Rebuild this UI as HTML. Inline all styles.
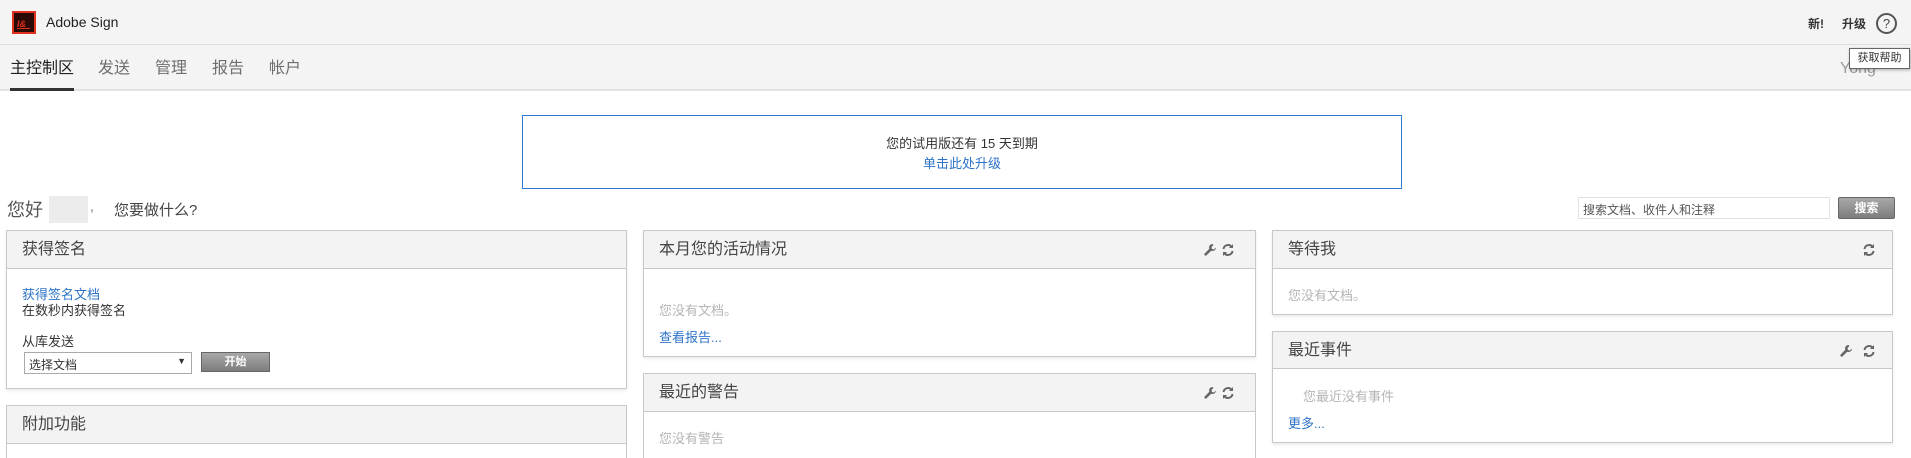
<!DOCTYPE html>
<html><head><meta charset="utf-8"><style>
*{margin:0;padding:0;box-sizing:border-box}
html{width:1911px;height:458px;overflow:hidden}
body{width:1911px;height:458px;overflow:hidden;background:#fff;font-family:"Liberation Sans","Noto Sans CJK SC",sans-serif;color:#333;position:relative}
.a{position:absolute;white-space:nowrap}
.hdr{position:absolute;left:0;top:0;width:1911px;height:45px;background:#f4f4f4;border-bottom:1px solid #ddd}
.nav{position:absolute;left:0;top:45px;width:1911px;height:46px;background:#f4f4f4;border-bottom:2px solid #e2e2e2}
.nav span{position:absolute;top:14px;font-size:16px;color:#6e6e6e;line-height:20px}
.panel{position:absolute;border:1px solid #c8c8c8;background:#fff;box-shadow:0 2px 3px rgba(0,0,0,.08)}
.ph{position:absolute;left:0;top:0;right:0;height:38px;background:#f3f3f3;border-bottom:1px solid #c8c8c8}
.ph .t{position:absolute;left:15px;top:9px;font-size:16px;color:#444;line-height:20px}
.gray{color:#b5b5b5;font-size:13px}
.blue{color:#2d74c8;font-size:13px}
.ic{position:absolute;top:12px}
</style></head><body>
<div class="hdr"></div>
<div class="a" style="left:12px;top:11px;width:24px;height:23px;background:#e0301e;padding:2px"><div style="width:100%;height:100%;background:#2b0a05;position:relative"><div style="position:absolute;left:3px;top:6px;font-size:9px;color:#e0301e;font-style:italic;font-weight:bold">I&amp;</div><div style="position:absolute;left:3px;bottom:3px;width:13px;height:1px;background:#e0301e"></div></div></div>
<div class="a" style="left:46px;top:14px;font-size:14px;color:#222">Adobe Sign</div>
<div class="a" style="left:1808px;top:15px;font-size:12px;font-weight:bold;color:#333">新!</div>
<div class="a" style="left:1842px;top:15px;font-size:12px;font-weight:bold;color:#333">升级</div>
<div class="a" style="left:1876px;top:13px;width:21px;height:21px;border:2px solid #555;border-radius:50%;text-align:center;font-size:13px;line-height:17px;color:#444">?</div>
<div class="nav">
<span style="left:10px;color:#222">主控制区</span>
<span style="left:98px">发送</span><span style="left:155px">管理</span><span style="left:212px">报告</span><span style="left:269px">帐户</span>
<div style="position:absolute;left:10px;top:43px;width:64px;height:3px;background:#333"></div>
<span style="left:1840px;color:#999">Yong</span>
</div>
<div class="a" style="left:1849px;top:48px;width:61px;height:21px;background:#fff;border:1px solid #666;font-size:11px;line-height:19px;text-align:center;box-shadow:1px 1px 3px rgba(0,0,0,.3)">获取帮助</div>

<div class="a" style="left:522px;top:115px;width:880px;height:74px;border:1px solid #2a7ad3"></div>
<div class="a" style="left:522px;top:133px;width:880px;text-align:center;font-size:13px;color:#333">您的试用版还有 15 天到期</div>
<div class="a" style="left:522px;top:153px;width:880px;text-align:center;font-size:13px;color:#2d74c8">单击此处升级</div>

<div class="a" style="left:7px;top:196px;font-size:18px;color:#555">您好</div>
<div class="a" style="left:49px;top:196px;width:39px;height:27px;background:#ececec"></div>
<div class="a" style="left:90px;top:198px;font-size:14px;color:#777">,</div>
<div class="a" style="left:114px;top:199px;font-size:15px;color:#444">您要做什么?</div>
<div class="a" style="left:1578px;top:197px;width:252px;height:22px;border:1px solid #e0e0e0;font-size:12px;color:#555;padding:3px 4px">搜索文档、收件人和注释</div>
<div class="a" style="left:1838px;top:197px;width:57px;height:22px;border:1px solid #666;border-radius:2px;background:linear-gradient(#a8a8a8,#7d7d7d);color:#fff;font-size:12px;font-weight:bold;text-align:center;line-height:20px">搜索</div>

<div class="panel" style="left:6px;top:230px;width:621px;height:159px"><div class="ph"><div class="t">获得签名</div></div>
<div class="a blue" style="left:15px;top:53px">获得签名文档</div>
<div class="a" style="left:15px;top:69px;font-size:13px;color:#333">在数秒内获得签名</div>
<div class="a" style="left:15px;top:100px;font-size:13px;color:#333">从库发送</div>
<div class="a" style="left:17px;top:121px;width:168px;height:22px;border:1px solid #aaa;font-size:12px;padding:3px 4px;color:#333">选择文档<span style="position:absolute;right:5px;top:3px;font-size:9px">▼</span></div>
<div class="a" style="left:194px;top:121px;width:69px;height:20px;border:1px solid #666;background:linear-gradient(#a8a8a8,#7d7d7d);color:#fff;font-size:11px;font-weight:bold;text-align:center;line-height:18px">开始</div>
</div>
<div class="panel" style="left:6px;top:405px;width:621px;height:56px;box-shadow:none"><div class="ph"><div class="t">附加功能</div></div></div>

<div class="panel" style="left:643px;top:230px;width:613px;height:127px"><div class="ph"><div class="t">本月您的活动情况</div>
<svg class="ic" style="left:559px" width="14" height="14" viewBox="0 0 14 14"><path d="M9.5 1a3.5 3.5 0 0 0-3.2 4.8L1 11.2 2.8 13l5.4-5.3A3.5 3.5 0 0 0 13 4.5l-2 2-2-.5-.5-2 2-2z" fill="#666"/></svg>
<svg class="ic" style="left:577px" width="14" height="14" viewBox="0 0 14 14"><path d="M2.5 6a4.6 4.6 0 0 1 8.3-2M11.5 8a4.6 4.6 0 0 1-8.3 2" stroke="#666" stroke-width="2" fill="none"/><path d="M12 1v4H8zM2 13V9h4z" fill="#666"/></svg></div>
<div class="a gray" style="left:15px;top:69px">您没有文档。</div>
<div class="a blue" style="left:15px;top:96px">查看报告...</div>
</div>
<div class="panel" style="left:643px;top:373px;width:613px;height:88px;box-shadow:none"><div class="ph"><div class="t">最近的警告</div>
<svg class="ic" style="left:559px" width="14" height="14" viewBox="0 0 14 14"><path d="M9.5 1a3.5 3.5 0 0 0-3.2 4.8L1 11.2 2.8 13l5.4-5.3A3.5 3.5 0 0 0 13 4.5l-2 2-2-.5-.5-2 2-2z" fill="#666"/></svg>
<svg class="ic" style="left:577px" width="14" height="14" viewBox="0 0 14 14"><path d="M2.5 6a4.6 4.6 0 0 1 8.3-2M11.5 8a4.6 4.6 0 0 1-8.3 2" stroke="#666" stroke-width="2" fill="none"/><path d="M12 1v4H8zM2 13V9h4z" fill="#666"/></svg></div>
<div class="a gray" style="left:15px;top:54px">您没有警告</div>
</div>

<div class="panel" style="left:1272px;top:230px;width:621px;height:85px"><div class="ph"><div class="t">等待我</div>
<svg class="ic" style="left:589px" width="14" height="14" viewBox="0 0 14 14"><path d="M2.5 6a4.6 4.6 0 0 1 8.3-2M11.5 8a4.6 4.6 0 0 1-8.3 2" stroke="#666" stroke-width="2" fill="none"/><path d="M12 1v4H8zM2 13V9h4z" fill="#666"/></svg></div>
<div class="a gray" style="left:15px;top:54px">您没有文档。</div>
</div>
<div class="panel" style="left:1272px;top:331px;width:621px;height:112px"><div class="ph" style="height:37px"><div class="t">最近事件</div>
<svg class="ic" style="left:566px" width="14" height="14" viewBox="0 0 14 14"><path d="M9.5 1a3.5 3.5 0 0 0-3.2 4.8L1 11.2 2.8 13l5.4-5.3A3.5 3.5 0 0 0 13 4.5l-2 2-2-.5-.5-2 2-2z" fill="#666"/></svg>
<svg class="ic" style="left:589px" width="14" height="14" viewBox="0 0 14 14"><path d="M2.5 6a4.6 4.6 0 0 1 8.3-2M11.5 8a4.6 4.6 0 0 1-8.3 2" stroke="#666" stroke-width="2" fill="none"/><path d="M12 1v4H8zM2 13V9h4z" fill="#666"/></svg></div>
<div class="a gray" style="left:30px;top:54px">您最近没有事件</div>
<div class="a blue" style="left:15px;top:81px">更多...</div>
</div>
</body></html>
